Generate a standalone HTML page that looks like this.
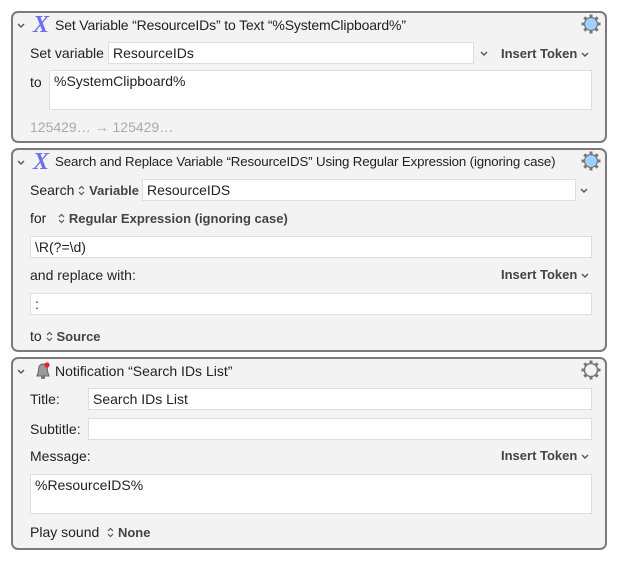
<!DOCTYPE html>
<html><head><meta charset="utf-8"><style>
body{margin:0;width:622px;height:564px;background:#fff;font-family:"Liberation Sans",sans-serif;font-size:14px;color:#222;position:relative;overflow:hidden}
.box{position:absolute;left:11px;width:596px;border:2px solid #7b7b7b;border-radius:7px;background:#f3f3f3;box-sizing:border-box}
.a{position:absolute;white-space:nowrap;line-height:16px}
.in{position:absolute;background:#fff;border:1px solid #dedede;box-sizing:border-box;padding:3px 4px;line-height:14px;white-space:nowrap}
.b{font-weight:bold;color:#444;font-size:13px}
b{font-size:13px}
.xi{position:absolute;font-family:"Liberation Serif",serif;font-style:italic;color:#6a70f0;font-size:24px;line-height:20px;font-weight:bold}
.gear{position:absolute;width:20px;height:20px}
.g{color:#aaa}
svg.cv{position:absolute;width:8px;height:5px}
svg.ud{display:inline-block;width:7px;height:11px;vertical-align:-1px}
</style></head><body>
<svg width="0" height="0" style="position:absolute"><defs>
<g id="gr"><g stroke="#777" stroke-width="3" stroke-linecap="butt">
<line x1="10" y1="0.5" x2="10" y2="19.5"/><line x1="0.5" y1="10" x2="19.5" y2="10"/>
<line x1="3.3" y1="3.3" x2="16.7" y2="16.7"/><line x1="16.7" y1="3.3" x2="3.3" y2="16.7"/></g></g>
<path id="cvp" d="M1 1 L4 4 L7 1" fill="none" stroke="#555" stroke-width="1.4"/>
<path id="udp" d="M1 4 L3.5 1.5 L6 4 M1 7 L3.5 9.5 L6 7" fill="none" stroke="#555" stroke-width="1.2"/>
</defs></svg>

<div class="box" style="top:11px;height:132px"></div>
<div class="box" style="top:148px;height:204px"></div>
<div class="box" style="top:357px;height:193px"></div>

<!-- Box 1 -->
<svg class="cv" style="left:17px;top:23px" viewBox="0 0 8 5"><use href="#cvp"/></svg>
<span class="xi" style="left:33px;top:15px">X</span>
<span class="a" style="left:55px;top:17px;letter-spacing:-0.15px">Set Variable “ResourceIDs” to Text “%SystemClipboard%”</span>
<svg class="gear" style="left:581px;top:14px" viewBox="0 0 20 20"><use href="#gr"/><circle cx="10" cy="10" r="6.5" fill="#9fd0ff" stroke="#777" stroke-width="1.2"/></svg>
<span class="a" style="left:30px;top:45px">Set variable</span>
<div class="in" style="left:108px;top:42px;width:366px;height:22px">ResourceIDs</div>
<svg class="cv" style="left:480px;top:51px" viewBox="0 0 8 5"><use href="#cvp"/></svg>
<span class="a b" style="left:501px;top:46px">Insert Token</span>
<svg class="cv" style="left:581px;top:52px" viewBox="0 0 8 5"><use href="#cvp"/></svg>
<span class="a" style="left:30px;top:74px">to</span>
<div class="in" style="left:49px;top:70px;width:543px;height:40px">%SystemClipboard%</div>
<span class="a g" style="left:30px;top:119px">125429… &#8594; 125429…</span>

<!-- Box 2 -->
<svg class="cv" style="left:17px;top:160px" viewBox="0 0 8 5"><use href="#cvp"/></svg>
<span class="xi" style="left:33px;top:152px">X</span>
<span class="a" style="left:55px;top:154px;font-size:13.3px;letter-spacing:-0.15px">Search and Replace Variable “ResourceIDS” Using Regular Expression (ignoring case)</span>
<svg class="gear" style="left:581px;top:151px" viewBox="0 0 20 20"><use href="#gr"/><circle cx="10" cy="10" r="6.5" fill="#9fd0ff" stroke="#777" stroke-width="1.2"/></svg>
<span class="a" style="left:30px;top:182px">Search <svg class="ud" viewBox="0 0 7 11"><use href="#udp"/></svg> <b style="color:#444">Variable</b></span>
<div class="in" style="left:142px;top:179px;width:434px;height:22px">ResourceIDS</div>
<svg class="cv" style="left:580px;top:188px" viewBox="0 0 8 5"><use href="#cvp"/></svg>
<span class="a" style="left:30px;top:210px">for &nbsp;&nbsp;<svg class="ud" viewBox="0 0 7 11"><use href="#udp"/></svg> <b style="color:#444">Regular Expression (ignoring case)</b></span>
<div class="in" style="left:30px;top:236px;width:562px;height:22px">\R(?=\d)</div>
<span class="a" style="left:30px;top:267px">and replace with:</span>
<span class="a b" style="left:501px;top:267px">Insert Token</span>
<svg class="cv" style="left:581px;top:273px" viewBox="0 0 8 5"><use href="#cvp"/></svg>
<div class="in" style="left:30px;top:293px;width:562px;height:22px">:</div>
<span class="a" style="left:30px;top:328px">to <svg class="ud" viewBox="0 0 7 11"><use href="#udp"/></svg> <b style="color:#444">Source</b></span>

<!-- Box 3 -->
<svg class="cv" style="left:17px;top:369px" viewBox="0 0 8 5"><use href="#cvp"/></svg>
<svg style="position:absolute;left:35px;top:362px" width="16" height="18" viewBox="0 0 16 18"><path d="M8 2 C4 2 3.5 6 3.5 9 L2 14 L14 14 L12.5 9 C12.5 6 12 2 8 2Z" fill="#999" stroke="#666"/><rect x="6" y="14" width="4" height="3" fill="#777"/><circle cx="12" cy="3" r="2.6" fill="#f02020"/></svg>
<span class="a" style="left:55px;top:363px">Notification “Search IDs List”</span>
<svg class="gear" style="left:581px;top:360px" viewBox="0 0 20 20"><use href="#gr"/><circle cx="10" cy="10" r="6.5" fill="#f3f3f3" stroke="#777" stroke-width="1.5"/></svg>
<span class="a" style="left:30px;top:391px">Title:</span>
<div class="in" style="left:88px;top:388px;width:504px;height:22px">Search IDs List</div>
<span class="a" style="left:30px;top:421px">Subtitle:</span>
<div class="in" style="left:88px;top:418px;width:504px;height:22px"></div>
<span class="a" style="left:30px;top:448px">Message:</span>
<span class="a b" style="left:501px;top:448px">Insert Token</span>
<svg class="cv" style="left:581px;top:454px" viewBox="0 0 8 5"><use href="#cvp"/></svg>
<div class="in" style="left:30px;top:474px;width:562px;height:40px">%ResourceIDS%</div>
<span class="a" style="left:30px;top:524px">Play sound &nbsp;<svg class="ud" viewBox="0 0 7 11"><use href="#udp"/></svg> <b style="color:#444">None</b></span>
</body></html>
